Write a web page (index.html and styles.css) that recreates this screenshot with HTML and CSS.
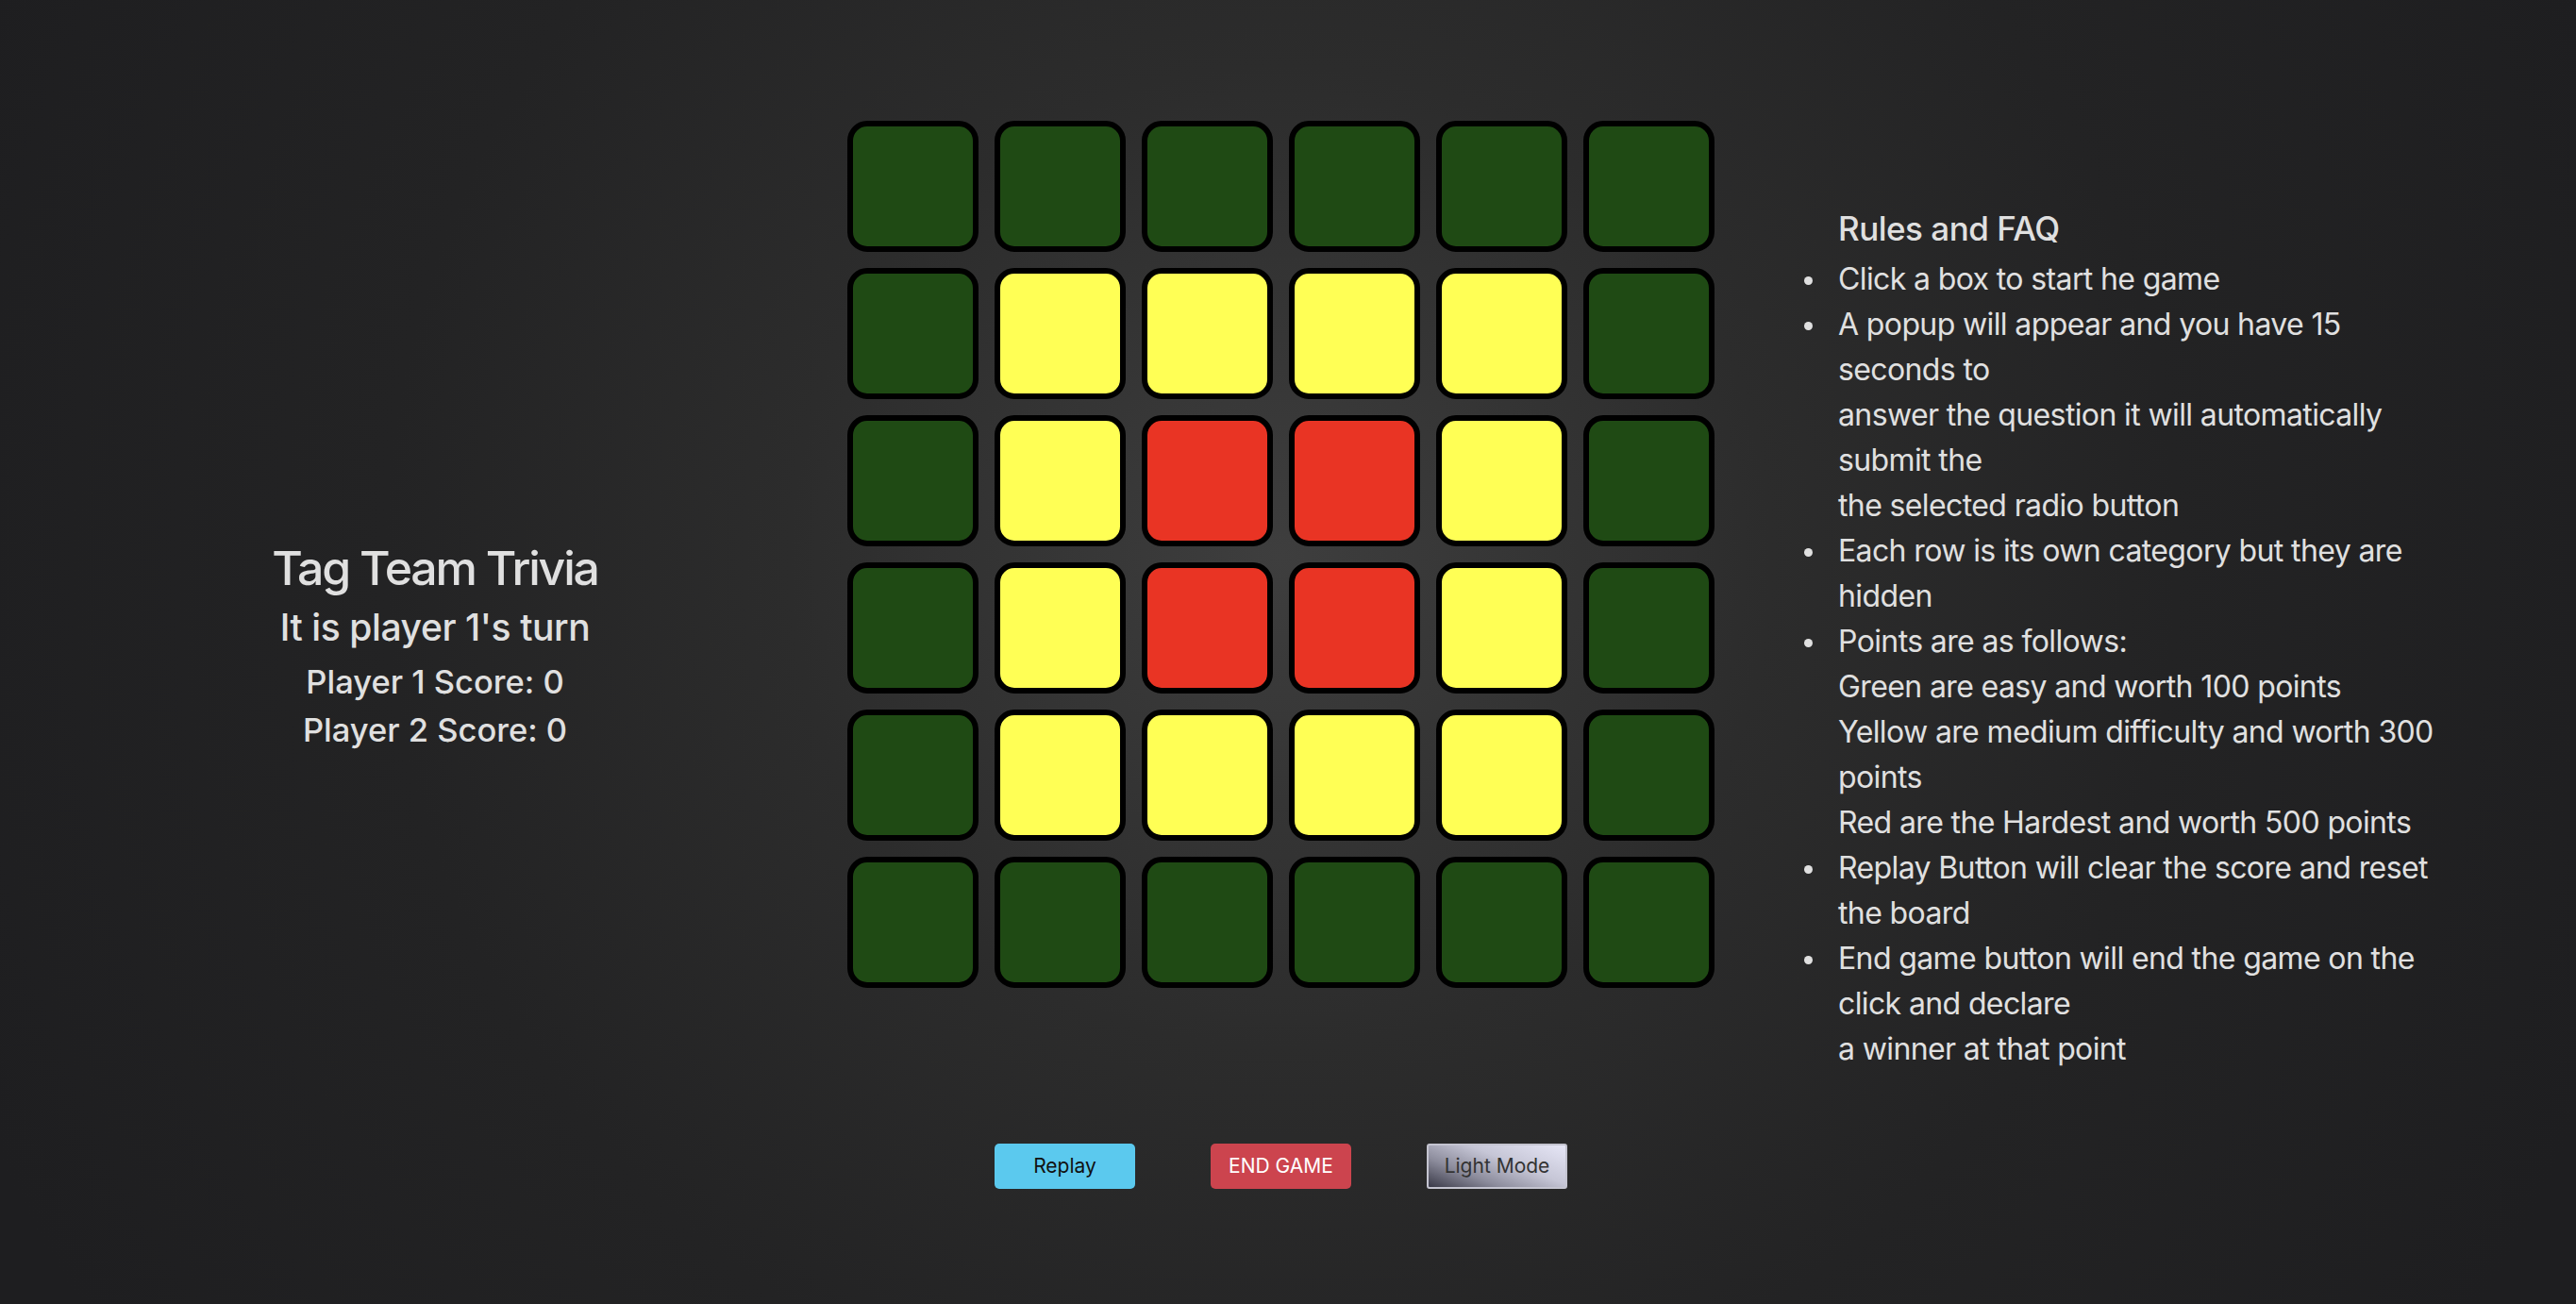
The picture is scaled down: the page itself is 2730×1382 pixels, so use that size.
FILE: index.html
```html
<!DOCTYPE html>
<html lang="en">
<head>
<meta charset="utf-8">
<title>Tag Team Trivia</title>
<link rel="stylesheet" href="styles.css">
</head>
<body>
<div class="page">
  <section class="info">
    <h1 class="title">Tag Team Trivia</h1>
    <h2 class="turn">It is player 1's turn</h2>
    <h3 class="score">Player 1 Score: 0</h3>
    <h3 class="score">Player 2 Score: 0</h3>
  </section>

  <section class="board-col">
    <div class="board">
      <div class="box green"></div><div class="box green"></div><div class="box green"></div><div class="box green"></div><div class="box green"></div><div class="box green"></div>
      <div class="box green"></div><div class="box yellow"></div><div class="box yellow"></div><div class="box yellow"></div><div class="box yellow"></div><div class="box green"></div>
      <div class="box green"></div><div class="box yellow"></div><div class="box red"></div><div class="box red"></div><div class="box yellow"></div><div class="box green"></div>
      <div class="box green"></div><div class="box yellow"></div><div class="box red"></div><div class="box red"></div><div class="box yellow"></div><div class="box green"></div>
      <div class="box green"></div><div class="box yellow"></div><div class="box yellow"></div><div class="box yellow"></div><div class="box yellow"></div><div class="box green"></div>
      <div class="box green"></div><div class="box green"></div><div class="box green"></div><div class="box green"></div><div class="box green"></div><div class="box green"></div>
    </div>
    <div class="controls">
      <button class="btn btn-replay">Replay</button>
      <button class="btn btn-end">END GAME</button>
      <button class="btn btn-light">Light Mode</button>
    </div>
  </section>

  <section class="rules">
    <h4 class="rules-title">Rules and FAQ</h4>
    <ul class="rules-list">
      <li>Click a box to start he game</li>
      <li>A popup will appear and you have 15<br>seconds to<br>answer the question it will automatically<br>submit the<br>the selected radio button</li>
      <li>Each row is its own category but they are<br>hidden</li>
      <li>Points are as follows:<br>Green are easy and worth 100 points<br>Yellow are medium difficulty and worth 300<br>points<br>Red are the Hardest and worth 500 points</li>
      <li>Replay Button will clear the score and reset<br>the board</li>
      <li>End game button will end the game on the<br>click and declare<br>a winner at that point</li>
    </ul>
  </section>
</div>
</body>
</html>
```

FILE: styles.css
```css
html, body {
  margin: 0;
  padding: 0;
}

body {
  width: 2730px;
  height: 1382px;
  overflow: hidden;
  font-family: Inter, "Noto Sans", "Liberation Sans", sans-serif;
  color: #e0e0e0;
  background: radial-gradient(circle at 1357px 590px, #3e3e3e 0px, #2c2c2c 520px, #232324 950px, #1e1e20 1500px);
}

.page {
  display: flex;
  flex-direction: row;
  align-items: center;
  height: 1382px;
}

/* left info column */
.info {
  flex: 0 0 874px;
  padding-left: 24px;
  padding-bottom: 11px;
  text-align: center;
}

.info h1, .info h2, .info h3 {
  margin: 0;
  font-weight: 500;
}

.title {
  font-size: 50px;
  line-height: 60px;
  letter-spacing: -2.2px;
}

.turn {
  font-size: 39px;
  line-height: 65px;
  letter-spacing: -0.4px;
}

.score {
  font-size: 34.5px;
  line-height: 51px;
  letter-spacing: 0;
}

/* board column */
.board-col {
  flex: 0 0 919px;
  display: flex;
  flex-direction: column;
  align-items: center;
  gap: 165px;
  padding-top: 5px;
}

.board {
  display: grid;
  grid-template-columns: repeat(6, 139px);
  grid-auto-rows: 139px;
  gap: 17px;
}

.box {
  box-sizing: border-box;
  border: 6px solid #000;
  border-radius: 21px;
}

.green { background: #1f4a14; }
.yellow { background: #ffff55; }
.red { background: #e93424; }

.controls {
  display: flex;
  gap: 80px;
}

.btn {
  box-sizing: border-box;
  width: 149px;
  height: 48px;
  border: 0;
  border-radius: 5px;
  font-family: Inter, "Noto Sans", "Liberation Sans", sans-serif;
  font-size: 21px;
  padding: 0;
}

.btn-replay {
  background: #5bc9ee;
  color: #111;
}

.btn-end {
  background: #cc444e;
  color: #fff;
}

.btn-light {
  border: 2px solid #c4c4d0;
  border-radius: 3px;
  color: #333;
  background: linear-gradient(22deg, #3a3a48 0%, #8c8c9c 30%, #c6c6d6 60%, #e6e6f6 100%);
}

/* rules column */
.rules {
  flex: 0 0 auto;
  margin-left: 67px;
  padding-bottom: 28px;
}

.rules-title {
  margin: 0 0 6px 64px;
  font-size: 35px;
  font-weight: 500;
  line-height: 48px;
  letter-spacing: -0.5px;
}

.rules-list {
  margin: 0;
  padding-left: 64px;
  list-style: none;
  font-size: 32px;
  line-height: 48px;
  letter-spacing: -0.62px;
  white-space: nowrap;
}

.rules-list li::before {
  content: "";
  display: inline-block;
  width: 9px;
  height: 9px;
  border-radius: 50%;
  background: #e0e0e0;
  vertical-align: middle;
  margin-left: -36px;
  margin-right: 27px;
  position: relative;
  top: -1px;
}
```
